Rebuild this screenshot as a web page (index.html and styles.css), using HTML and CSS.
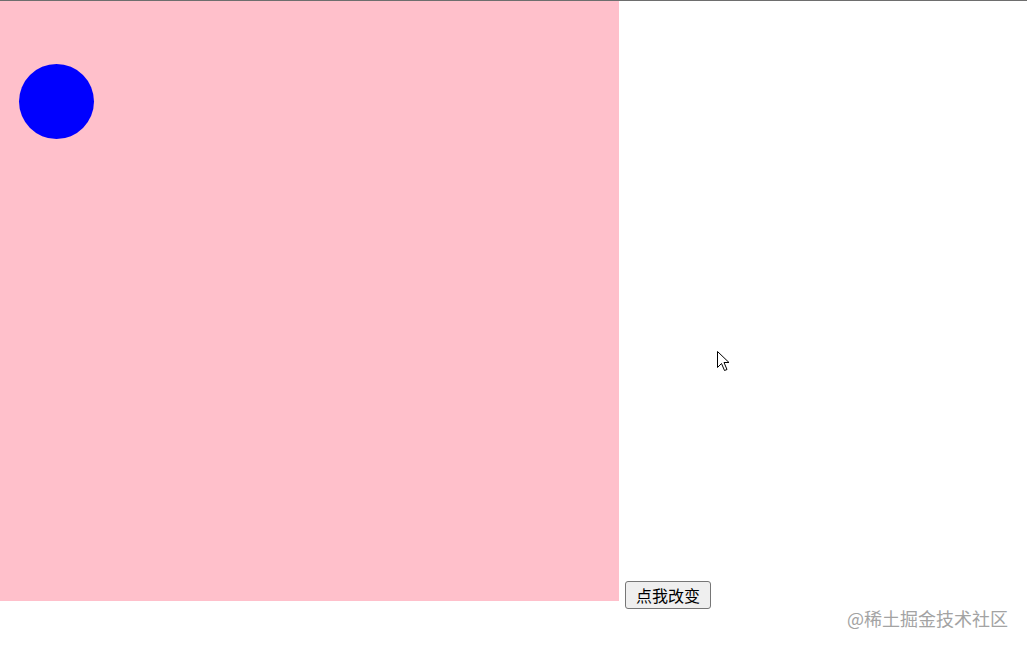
FILE: index.html
```html
<!DOCTYPE html>
<html lang="zh">
<head>
<meta charset="utf-8">
<title>demo</title>
<link rel="stylesheet" href="styles.css">
</head>
<body>
<div class="page">
  <div class="stage">
    <div class="ball"></div>
  </div>
  <button class="btn">点我改变</button>
</div>
<div class="watermark">@稀土掘金技术社区</div>
<svg class="cursor" width="13" height="21" viewBox="0 0 13 21">
  <path d="M0.5 0.5 L0.5 16.5 L4.5 12.5 L7.5 19.5 L10 18.5 L7 11.5 L12 11.5 Z" fill="#fff" stroke="#000" stroke-width="1" stroke-linejoin="miter"/>
</svg>
</body>
</html>
```

FILE: styles.css
```css
html, body {
  margin: 0;
  padding: 0;
  background: #fff;
  font-family: "Noto Sans CJK SC", "Liberation Sans", sans-serif;
}
body {
  border-top: 1px solid #6e6e6e;
  width: 1027px;
  height: 646px;
  overflow: hidden;
  position: relative;
}
.page {
  display: flex;
  align-items: flex-end;
  gap: 6px;
}
.stage {
  width: 619px;
  height: 600px;
  background: pink;
  padding: 63px 0 0 19px;
  box-sizing: border-box;
  flex: none;
}
.ball {
  width: 75px;
  height: 75px;
  border-radius: 50%;
  background: blue;
}
.btn {
  margin-bottom: -8px;
  height: 28px;
  width: 86px;
  padding: 0 6px;
  background: #efefef;
  border: 1px solid #767676;
  border-radius: 3px;
  font-family: "Noto Sans CJK SC", sans-serif;
  font-size: 16px;
  line-height: 24px;
  color: #000;
  box-sizing: border-box;
}
.watermark {
  position: absolute;
  left: 847px;
  top: 604px;
  font-size: 18px;
  line-height: 26px;
  color: #a3a3a3;
  font-family: "Noto Sans CJK SC", sans-serif;
  letter-spacing: 0;
}
.cursor {
  position: absolute;
  left: 717px;
  top: 350px;
}
```
